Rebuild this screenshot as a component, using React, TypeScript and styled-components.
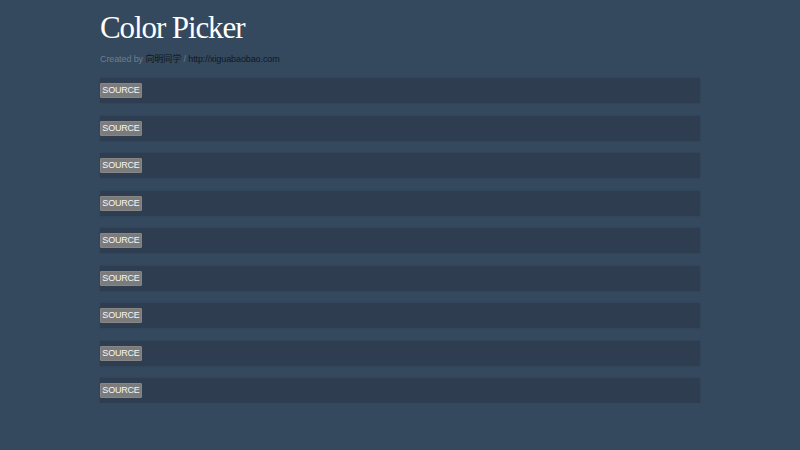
import React from "react";
import styled, { createGlobalStyle } from "styled-components";

const Global = createGlobalStyle`
  html, body { margin: 0; padding: 0; background: #34495e; }
  body { font-family: "Liberation Sans", Arial, sans-serif; }
`;

const Page = styled.div`
  width: 600px;
  margin: 0 auto;
  padding-top: 10px;
`;

const Title = styled.h1`
  margin: 0;
  font-family: "Liberation Serif", "Times New Roman", serif;
  font-weight: normal;
  font-size: 31px;
  letter-spacing: -1.1px;
  line-height: 35px;
  color: #ffffff;
`;

const Byline = styled.p`
  margin: 8px 0 0;
  font-size: 9px;
  letter-spacing: -0.1px;
  line-height: 12px;
  color: #6b7e90;
`;

const Dark = styled.span`
  color: #111820;
  font-family: "Liberation Sans", "Noto Sans CJK SC", sans-serif;
`;

const List = styled.div`
  margin-top: 13px;
  display: flex;
  flex-direction: column;
  gap: 12.5px;
`;

const Row = styled.div`
  height: 25px;
  background: #2e3e50;
  box-shadow: 0 0 2px rgba(0, 0, 0, 0.12);
  display: flex;
  align-items: flex-start;
  padding-top: 5px;
  box-sizing: border-box;
`;

const SourceButton = styled.button`
  height: 15px;
  width: 42px;
  padding: 0;
  border: 1px solid #868686;
  border-radius: 1px;
  background: #7b7b7b;
  color: #f6f6f6;
  font-family: "Liberation Sans", Arial, sans-serif;
  font-size: 9px;
  letter-spacing: -0.2px;
  line-height: 13px;
  text-align: center;
`;

export default function App() {
  const rows = Array.from({ length: 9 }, (_, i) => i);
  return (
    <>
      <Global />
      <Page>
        <Title>Color Picker</Title>
        <Byline>
          Created by <Dark>向明同学</Dark> / <Dark>http://xiguabaobao.com</Dark>
        </Byline>
        <List>
          {rows.map((i) => (
            <Row key={i}>
              <SourceButton>SOURCE</SourceButton>
            </Row>
          ))}
        </List>
      </Page>
    </>
  );
}
